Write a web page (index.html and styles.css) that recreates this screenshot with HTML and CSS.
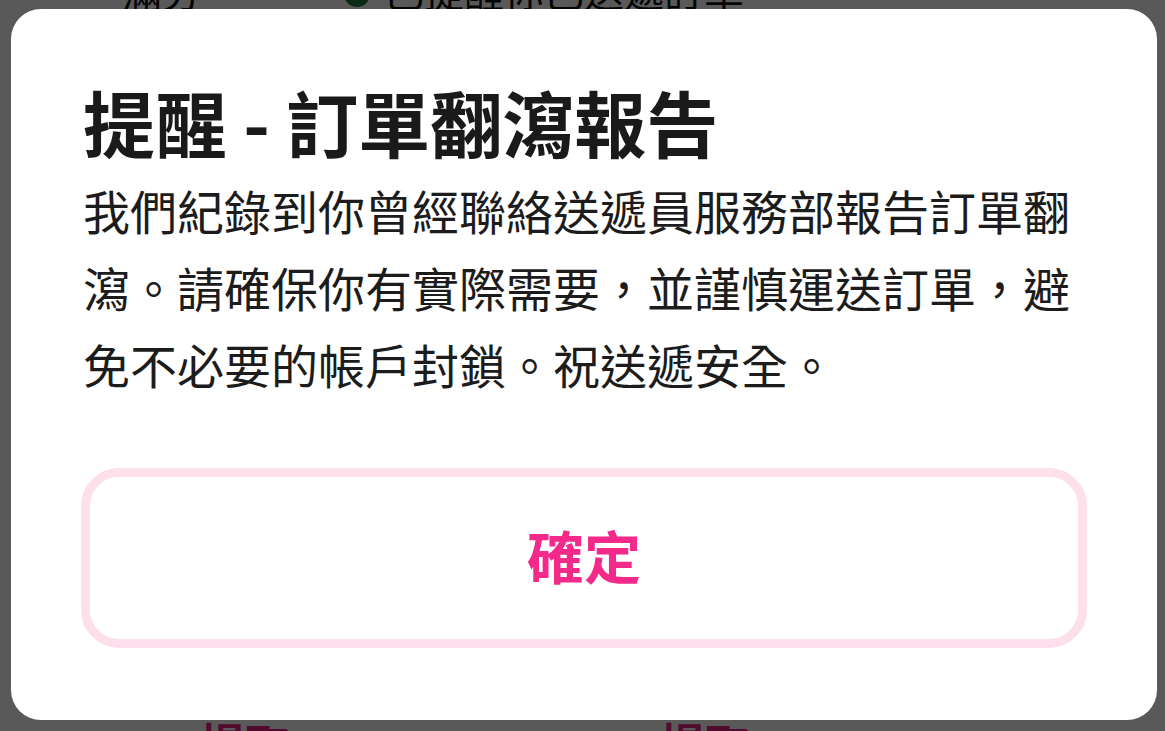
FILE: index.html
```html
<!DOCTYPE html>
<html lang="zh-Hant">
<head>
<meta charset="utf-8">
<title>提醒 - 訂單翻瀉報告</title>
<link rel="stylesheet" href="styles.css">
</head>
<body>
<div class="page">
  <div class="top-row">
    <span class="top-label">滿分</span>
    <span class="top-dot"></span>
    <span class="top-text">已提醒你已送遞訂單</span>
  </div>
  <div class="bottom-row">
    <span class="pick">提取</span>
    <span class="pick">提取</span>
  </div>
</div>
<div class="overlay"></div>
<div class="modal" role="dialog" aria-labelledby="dlg-title">
  <h1 class="modal-title" id="dlg-title">提醒 - 訂單翻瀉報告</h1>
  <p class="modal-text">我們紀錄到你曾經聯絡送遞員服務部報告訂單翻瀉。請確保你有實際需要，並謹慎運送訂單，避免不必要的帳戶封鎖。祝送遞安全。</p>
  <button class="modal-btn" type="button">確定</button>
</div>
</body>
</html>
```
FILE: styles.css
```css
* { box-sizing: border-box; }
html, body { margin: 0; padding: 0; }
body {
  width: 1165px;
  height: 731px;
  overflow: hidden;
  background: #ffffff;
  font-family: "Noto Sans CJK TC", "Noto Sans", sans-serif;
  color: #1a1a1a;
}
.page {
  height: 731px;
  overflow: hidden;
  display: flex;
  flex-direction: column;
  justify-content: space-between;
}
.top-row {
  display: flex;
  align-items: center;
  height: 40px;
  margin-top: -30px;
  padding-left: 122px;
  font-size: 40px;
  line-height: 40px;
  color: #111;
}
.top-label { width: 222px; }
.top-dot {
  width: 26px;
  height: 26px;
  border-radius: 50%;
  background: #1f7a3a;
  margin-right: 14px;
  margin-top: 8px;
}
.top-text { font-size: 40px; }
.bottom-row {
  display: flex;
  height: 18px;
  overflow: hidden;
  padding-left: 200px;
  gap: 370px;
  font-size: 45px;
  line-height: 60px;
  font-weight: 700;
  color: #e8207f;
}
.pick { display: block; }
.overlay {
  position: fixed;
  inset: 0;
  background: rgba(0, 0, 0, 0.65);
}
.modal {
  position: fixed;
  left: 11px;
  top: 9px;
  width: 1146px;
  height: 711px;
  background: #ffffff;
  border-radius: 30px;
  padding: 70px 72px 72px;
  display: flex;
  flex-direction: column;
}
.modal-title {
  margin: 0;
  font-size: 72px;
  line-height: 84px;
  font-weight: 700;
  color: #1a1a1a;
  white-space: nowrap;
}
.modal-text {
  margin: 8px 0 0;
  font-size: 47px;
  line-height: 77px;
  font-weight: 400;
  color: #1c1c1c;
}
.modal-btn {
  margin: 66px -2px 0;
  height: 180px;
  border: 9px solid #fde0eb;
  border-radius: 38px;
  background: #ffffff;
  font-family: "Noto Sans CJK TC", "Noto Sans", sans-serif;
  font-size: 57px;
  font-weight: 700;
  color: #f42a8b;
  padding: 0 0 8px;
}
```
